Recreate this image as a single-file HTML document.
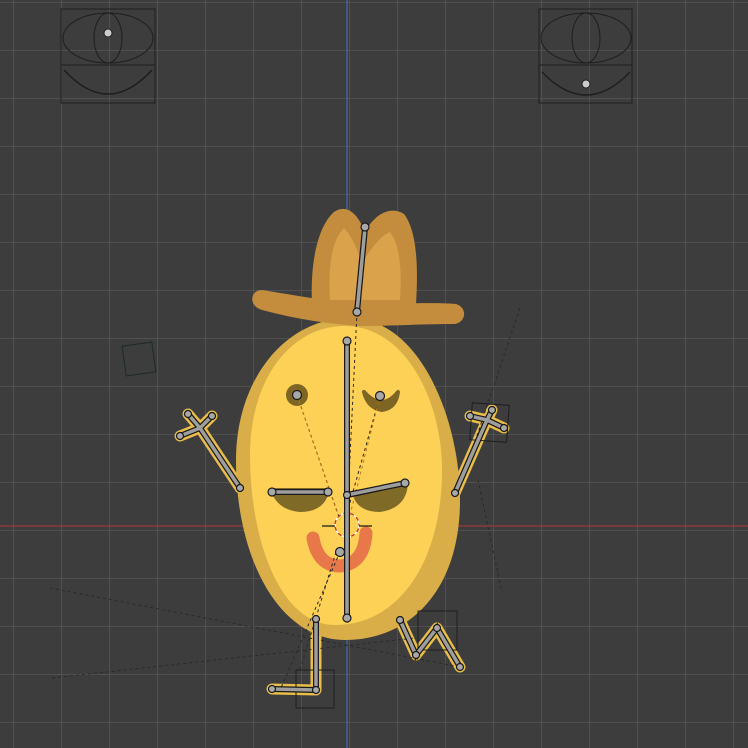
<!DOCTYPE html>
<html><head><meta charset="utf-8"><style>
html,body{margin:0;padding:0;background:#3d3d3d;width:748px;height:748px;overflow:hidden}
</style></head><body>
<svg width="748" height="748" viewBox="0 0 748 748" xmlns="http://www.w3.org/2000/svg">
<defs>
<pattern id="g" x="13" y="2" width="48" height="48" patternUnits="userSpaceOnUse">
<path d="M0 0H48M0 0V48" stroke="#565656" stroke-width="1.5" fill="none"/>
</pattern>
</defs>
<rect width="748" height="748" fill="#3d3d3d"/>
<rect width="748" height="748" fill="url(#g)"/>
<line x1="0" y1="526" x2="748" y2="526" stroke="#9a3a3f" stroke-width="1.2"/>
<line x1="347" y1="0" x2="347" y2="748" stroke="#3f6fb0" stroke-width="1.2"/>

<g fill="none" stroke="#1e1e1e" stroke-width="1">
<rect x="61" y="9" width="94" height="94"/>
<line x1="61" y1="65" x2="155" y2="65"/>
<ellipse cx="108" cy="38" rx="45" ry="25"/>
<ellipse cx="108" cy="38" rx="14" ry="25"/>
<path d="M64 70 Q108 118 152 70" stroke-width="1.5"/>
<rect x="539" y="9" width="93" height="94"/>
<line x1="539" y1="65" x2="632" y2="65"/>
<ellipse cx="586" cy="38" rx="45" ry="25"/>
<ellipse cx="586" cy="38" rx="14" ry="25"/>
<path d="M542 72 Q586 118 630 72" stroke-width="1.5"/>
<rect x="124" y="344" width="30" height="30" transform="rotate(-8 139 359)" stroke="#1c2a28"/>
</g>
<circle cx="108" cy="33" r="4" fill="#ccc" stroke="#222"/>
<circle cx="586" cy="84" r="4" fill="#ccc" stroke="#222"/>

<g stroke="#e8bd4a" stroke-width="11" stroke-linecap="round" stroke-linejoin="round" fill="none">
<path d="M240 488 L200 428 M200 428 L188 414 M200 428 L212 416 M200 428 L180 436"/>
<path d="M455 493 L487 420 M487 420 L470 416 M487 420 L492 410 M487 420 L504 428"/>
<path d="M316 618 L316 690 L272 689"/>
<path d="M400 620 L416 655 L437 628 L460 667"/>
</g>

<path d="M350 318 C420 318 460 420 460 500 C460 590 410 640 345 640 C280 640 236 560 236 460 C236 380 285 318 350 318Z" fill="#d9ae48"/>
<path d="M345 326 C405 326 442 400 442 470 C442 560 400 625 335 625 C280 625 250 540 250 455 C250 380 290 326 345 326Z" fill="#fdd056"/>

<path d="M312 304 C310 262 318 226 334 212 C346 204 357 212 365 232 C376 212 392 206 404 214 C418 232 418 272 416 304 Z" fill="#c48d3e"/>
<path d="M330 300 C328 265 332 240 344 228 C352 236 358 252 362 262 C372 248 380 236 390 232 C400 245 402 270 400 300 Z" fill="#d9a24b"/>
<path d="M262 290 C300 296 330 302 360 303 C400 304 440 302 456 304 C468 308 466 322 455 324 C420 324 390 326 360 326 C330 324 300 320 262 310 C248 306 250 290 262 290 Z" fill="#c48d3e"/>

<circle cx="297" cy="395" r="11" fill="#7e6524"/>
<path d="M364 392 Q382 412 398 392 Q396 408 382 410 Q368 408 364 392 Z" fill="#7e6524" stroke="#7e6524" stroke-width="4" stroke-linejoin="round"/>
<path d="M270 488 L330 488 Q326 512 300 512 Q276 510 270 488 Z" fill="#806a28"/>
<path d="M352 492 L408 481 Q408 508 380 512 Q356 512 352 492 Z" fill="#806a28"/>
<path d="M313 538 Q318 566 340 566 Q364 564 366 533" stroke="#e8784a" stroke-width="13" fill="none" stroke-linecap="round"/>

<g stroke="#2a2a2a" stroke-width="1" stroke-dasharray="3,3" fill="none">
<line x1="520" y1="308" x2="458" y2="492"/>
<line x1="478" y1="480" x2="502" y2="592"/>
<line x1="50" y1="588" x2="460" y2="667"/>
<line x1="52" y1="678" x2="415" y2="638"/>
<line x1="297" y1="395" x2="340" y2="520"/>
<line x1="380" y1="396" x2="345" y2="520"/>
<line x1="357" y1="312" x2="345" y2="560"/>
<line x1="340" y1="552" x2="280" y2="690"/>
<line x1="336" y1="552" x2="300" y2="670"/>
</g>
<g stroke="#c07a20" stroke-width="1" stroke-dasharray="3,3" fill="none">
<line x1="297" y1="395" x2="338" y2="515"/>
<line x1="380" y1="396" x2="350" y2="515"/>
</g>
<g fill="none" stroke="#1e1e1e" stroke-width="1">
<rect x="471" y="404" width="37" height="37" transform="rotate(4 489 422)"/>
<rect x="418" y="611" width="39" height="39"/>
<rect x="296" y="670" width="38" height="38"/>
</g>

<circle cx="347" cy="525" r="12" fill="none" stroke="#fff" stroke-width="1.3" stroke-dasharray="4,3"/>
<circle cx="347" cy="525" r="12" fill="none" stroke="#c0392b" stroke-width="1.3" stroke-dasharray="4,3" stroke-dashoffset="3.5"/>
<line x1="322" y1="526" x2="335" y2="526" stroke="#111" stroke-width="1.2"/>
<line x1="359" y1="526" x2="372" y2="526" stroke="#111" stroke-width="1.2"/>

<g stroke-linecap="round" fill="none">
<g stroke="#1a1a1a" stroke-width="6">
<path d="M347 340 L347 618 M365 228 L357 312 M272 492 L328 492 M347 495 L405 483"/>
<path d="M240 488 L200 428 M200 428 L188 414 M200 428 L212 416 M200 428 L180 436"/>
<path d="M455 493 L487 420 M487 420 L470 416 M487 420 L492 410 M487 420 L504 428"/>
<path d="M316 618 L316 690 L272 689 M400 620 L416 655 L437 628 L460 667"/>
</g>
<g stroke="#9e9e9e" stroke-width="3.5">
<path d="M347 340 L347 618 M365 228 L357 312 M272 492 L328 492 M347 495 L405 483"/>
<path d="M240 488 L200 428 M200 428 L188 414 M200 428 L212 416 M200 428 L180 436"/>
<path d="M455 493 L487 420 M487 420 L470 416 M487 420 L492 410 M487 420 L504 428"/>
<path d="M316 618 L316 690 L272 689 M400 620 L416 655 L437 628 L460 667"/>
</g>
</g>
<g fill="#a8a8a8" stroke="#1a1a1a" stroke-width="1.2">
<circle cx="347" cy="341" r="4"/><circle cx="347" cy="618" r="4"/>
<circle cx="365" cy="227" r="4"/><circle cx="357" cy="312" r="4"/>
<circle cx="272" cy="492" r="4"/><circle cx="328" cy="492" r="4"/>
<circle cx="405" cy="483" r="4"/><circle cx="347" cy="495" r="3.5"/>
<circle cx="297" cy="395" r="4.5"/><circle cx="380" cy="396" r="4.5"/>
<circle cx="340" cy="552" r="4.5"/>
<circle cx="240" cy="488" r="3.5"/><circle cx="188" cy="414" r="3.5"/><circle cx="212" cy="416" r="3.5"/><circle cx="180" cy="436" r="3.5"/>
<circle cx="455" cy="493" r="3.5"/><circle cx="470" cy="416" r="3.5"/><circle cx="492" cy="410" r="3.5"/><circle cx="504" cy="428" r="3.5"/>
<circle cx="316" cy="619" r="3.5"/><circle cx="316" cy="690" r="3.5"/><circle cx="272" cy="689" r="3.5"/>
<circle cx="400" cy="620" r="3.5"/><circle cx="416" cy="655" r="3.5"/><circle cx="437" cy="628" r="3.5"/><circle cx="460" cy="667" r="3.5"/>
</g>
</svg>
</body></html>
